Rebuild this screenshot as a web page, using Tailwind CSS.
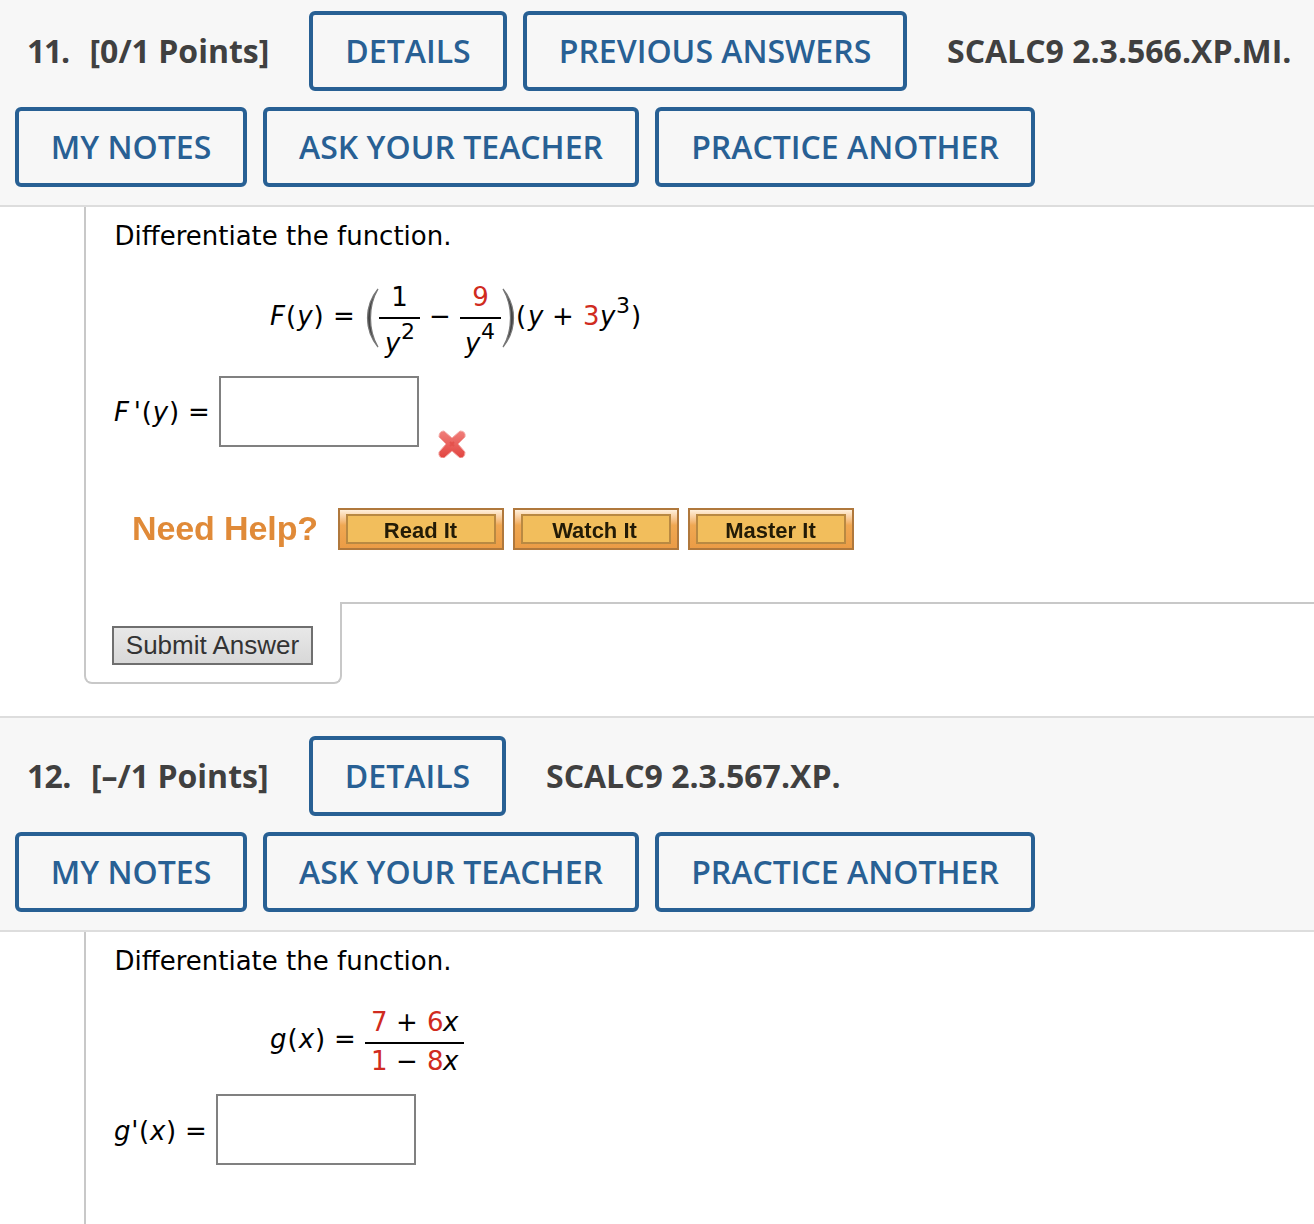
<!DOCTYPE html>
<html lang="en">
<head>
  <meta charset="UTF-8" />
  <meta name="viewport" content="width=device-width, initial-scale=1.0" />
  <title>Homework - Differentiate the function</title>
  <script src="https://cdn.jsdelivr.net/npm/@tailwindcss/browser@4"></script>
</head>
<body class="h-[1224px] overflow-hidden bg-white font-['DejaVu_Sans',sans-serif] text-[26px] leading-[30px] text-black">

  <!-- Question 11 -->
  <section>
    <header class="h-[207px] border-b-2 border-[#dddddd] bg-[#f7f7f7] pt-[11px] pl-[15px] font-['Open_Sans',sans-serif] text-[32px] leading-[72px] whitespace-nowrap">
      <div class="flex h-20 font-bold text-[#404040]">
        <span class="ml-3 w-[62.5px] leading-[79px] tracking-[-1.3px]">11.</span>
        <span class="w-[219.5px] leading-[80px]">[0/1 Points]</span>
        <button class="h-20 w-[198px] rounded-md border-4 border-[#286094] text-center font-semibold text-[#286094]">DETAILS</button>
        <button class="ml-4 h-20 w-[384px] rounded-md border-4 border-[#286094] text-center font-semibold text-[#286094]">PREVIOUS ANSWERS</button>
        <span class="ml-10 leading-[80px]">SCALC9 2.3.566.XP.MI.</span>
      </div>
      <div class="mt-4 flex h-20 gap-4 font-semibold text-[#286094]">
        <button class="w-[232px] rounded-md border-4 border-[#286094]">MY NOTES</button>
        <button class="w-[376px] rounded-md border-4 border-[#286094]">ASK YOUR TEACHER</button>
        <button class="w-[380px] rounded-md border-4 border-[#286094]">PRACTICE ANOTHER</button>
      </div>
    </header>

    <div class="ml-[84px] h-[395px] border-l-2 border-[#c8c8c8] pt-[14px] pl-7 whitespace-nowrap">
      <p class="flex pl-[0.5px]"><span class="w-[171.5px]">Differentiate</span><span class="w-[51px]">the</span><span>function.</span></p>

      <!-- F(y) = (1/y^2 - 9/y^4)(y + 3y^3) -->
      <div class="mt-[31px] ml-[156px] flex h-20 items-start">
        <span class="mt-[19px] w-[63px] tracking-[1px]"><i>F</i>(<i>y</i>)</span>
        <span class="mt-[19px] w-8">=</span>
        <svg class="mt-[6px] h-[60px] w-[14px] shrink-0" viewBox="0 0 14 60" fill="none">
          <path d="M13 1C-1 18 -1 42 13 59C3 42 3 18 13 1Z" fill="#444" stroke="#777" stroke-width="1.2" />
        </svg>
        <div class="w-[41px]">
          <div class="text-center">1</div>
          <div class="mt-[5px] h-[2px] bg-black"></div>
          <div class="flex pl-[6px]"><i class="mt-[9px] w-4">y</i><span class="mt-px text-[22px] leading-[24px]">2</span></div>
        </div>
        <span class="mt-[19px] w-10 text-center">−</span>
        <div class="w-[41px]">
          <div class="text-center text-[#d02b20]">9</div>
          <div class="mt-[5px] h-[2px] bg-black"></div>
          <div class="flex pl-[5px]"><i class="mt-[9px] w-4">y</i><span class="mt-px text-[22px] leading-[24px]">4</span></div>
        </div>
        <svg class="mt-[6px] ml-px h-[60px] w-[14px] shrink-0" viewBox="0 0 14 60" fill="none">
          <path d="M1 1C15 18 15 42 1 59C11 42 11 18 1 1Z" fill="#444" stroke="#777" stroke-width="1.2" />
        </svg>
        <span class="mt-[19px] w-3">(</span>
        <i class="mt-[19px] w-6">y</i>
        <span class="mt-[19px] w-[31px]">+</span>
        <span class="mt-[19px] w-[17px] text-[#d02b20]">3</span>
        <i class="mt-[19px] w-4">y</i>
        <span class="mt-3 w-[15px] text-[22px] leading-[24px]">3</span>
        <span class="mt-[19px]">)</span>
      </div>

      <div class="mt-[14px] flex h-[82px] items-start">
        <span class="mt-[21px] w-[74px] tracking-[0.8px]"><i>F</i> <i class="-ml-[5px]">'</i>(<i>y</i>)</span>
        <span class="mt-[21px] w-[31px]">=</span>
        <input type="text" class="h-[71px] w-[200px] border-2 border-[#808080] bg-white" />
        <svg class="mt-[54px] ml-[19px] size-7 blur-[0.5px]" viewBox="0 0 28 28">
          <defs>
            <linearGradient id="wrong" x1="0" y1="0" x2="0" y2="1">
              <stop offset="0" stop-color="#f07e7a" />
              <stop offset="1" stop-color="#e2443f" />
            </linearGradient>
          </defs>
          <path d="M6 1L14 8L22 1Q28 1 27 7L20 14L27 22Q27 28 22 28L14 21L6 28Q0 28 1 22L8 14L1 7Q1 1 6 1Z" fill="url(#wrong)" stroke="#f3a5a2" stroke-width="1" />
          <path d="M12 12L16 16M16 12L12 16" stroke="#e4524d" stroke-width="2" />
        </svg>
      </div>

      <div class="mt-[50px] flex h-[42px] font-['Liberation_Sans',sans-serif] font-bold">
        <span class="ml-[18px] w-[206px] text-[34px] leading-[41px] tracking-[-0.1px] text-[#e08a38] blur-[0.6px]">Need Help?</span>
        <div class="flex gap-[9px] text-[22px] text-[#231b06]">
          <button class="h-[42px] w-[166px] border-2 border-[#b0783c] bg-linear-to-b from-[#fff0dc] from-0% via-[#f0a852] via-40% to-[#eb9c46] px-[6px] pt-1 pb-1"><span class="block h-[30px] border-2 border-[#b98942] bg-[#f2be5c] pr-px leading-[29px]"><span class="block blur-[0.6px]">Read It</span></span></button>
          <button class="h-[42px] w-[166px] border-2 border-[#b0783c] bg-linear-to-b from-[#fff0dc] from-0% via-[#f0a852] via-40% to-[#eb9c46] px-[6px] pt-1 pb-1"><span class="block h-[30px] border-2 border-[#b98942] bg-[#f2be5c] pr-[3px] leading-[29px]"><span class="block blur-[0.6px]">Watch It</span></span></button>
          <button class="h-[42px] w-[166px] border-2 border-[#b0783c] bg-linear-to-b from-[#fff0dc] from-0% via-[#f0a852] via-40% to-[#eb9c46] px-[6px] pt-1 pb-1"><span class="block h-[30px] border-2 border-[#b98942] bg-[#f2be5c] pr-px leading-[29px]"><span class="block blur-[0.6px]">Master It</span></span></button>
        </div>
      </div>
    </div>

    <!-- submit tab -->
    <div class="ml-[84px] flex h-[82px]">
      <div class="w-[258px] rounded-b-lg border-2 border-t-0 border-[#c8c8c8] pt-6 pl-[26px]">
        <button class="block h-[39px] w-[201px] border-2 border-[#6f6f6f] bg-linear-to-b from-[#e8e8e8] to-[#d8d8d8] font-['Liberation_Sans',sans-serif] leading-[35px] whitespace-nowrap text-[#333333]">Submit Answer</button>
      </div>
      <div class="flex-1 border-t-2 border-[#c8c8c8]"></div>
    </div>
  </section>

  <!-- Question 12 -->
  <section class="mt-8">
    <header class="h-[216px] border-y-2 border-[#dddddd] bg-[#f7f7f7] pt-[18px] pl-[15px] font-['Open_Sans',sans-serif] text-[32px] leading-[72px] whitespace-nowrap">
      <div class="flex h-20 font-bold text-[#404040]">
        <span class="ml-3 w-[64px] leading-[79px] tracking-[-0.7px]">12.</span>
        <span class="w-[218px] leading-[80px]">[–/1 Points]</span>
        <button class="h-20 w-[197px] rounded-md border-4 border-[#286094] text-center font-semibold text-[#286094]">DETAILS</button>
        <span class="ml-10 leading-[80px]">SCALC9 2.3.567.XP.</span>
      </div>
      <div class="mt-4 flex h-20 gap-4 font-semibold text-[#286094]">
        <button class="w-[232px] rounded-md border-4 border-[#286094]">MY NOTES</button>
        <button class="w-[376px] rounded-md border-4 border-[#286094]">ASK YOUR TEACHER</button>
        <button class="w-[380px] rounded-md border-4 border-[#286094]">PRACTICE ANOTHER</button>
      </div>
    </header>

    <div class="ml-[84px] h-[292px] border-l-2 border-[#c8c8c8] pt-[14px] pl-7 whitespace-nowrap">
      <p class="flex pl-[0.5px]"><span class="w-[171.5px]">Differentiate</span><span class="w-[51px]">the</span><span>function.</span></p>

      <!-- g(x) = (7 + 6x)/(1 - 8x) -->
      <div class="mt-[31px] ml-[156px] flex h-[69px] items-start">
        <span class="mt-[17px] w-[64px] tracking-[1px]"><i>g</i>(<i>x</i>)</span>
        <span class="mt-[17px] w-[31px]">=</span>
        <div class="w-[99px]">
          <div class="flex pl-[6px]"><span class="w-[25px] text-[#d02b20]">7</span><span class="w-[31px]">+</span><span class="w-4 text-[#d02b20]">6</span><i>x</i></div>
          <div class="mt-[5px] h-[2px] bg-black"></div>
          <div class="mt-[2px] flex pl-[6px]"><span class="w-[25px] text-[#d02b20]">1</span><span class="w-[31px]">−</span><span class="w-4 text-[#d02b20]">8</span><i>x</i></div>
        </div>
      </div>

      <div class="mt-[18px] flex items-start">
        <span class="mt-[22px] w-[71px] tracking-[0.7px]"><i>g</i><i>'</i>(<i>x</i>)</span>
        <span class="mt-[22px] w-[31px]">=</span>
        <input type="text" class="h-[71px] w-[200px] border-2 border-[#808080] bg-white" />
      </div>
    </div>
  </section>

</body>
</html>
